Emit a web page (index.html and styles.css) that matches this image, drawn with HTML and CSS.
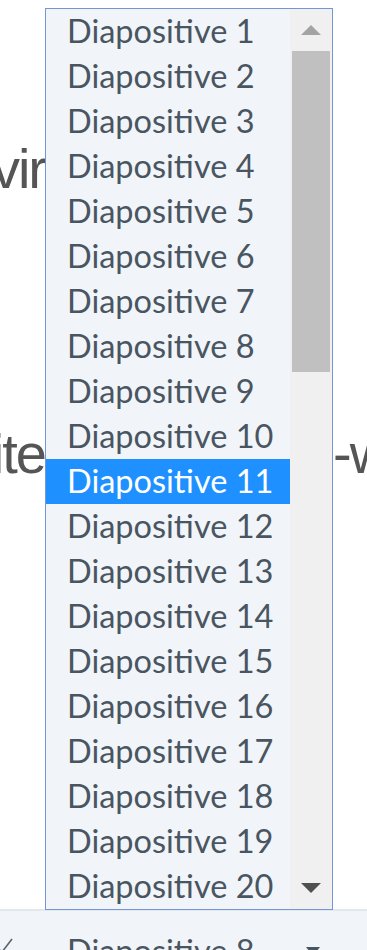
FILE: index.html
```html
<!DOCTYPE html>
<html lang="fr">
<head>
  <meta charset="UTF-8">
  <meta name="viewport" content="width=device-width, initial-scale=1.0">
  <title>Diapositives</title>
  <link rel="stylesheet" href="styles.css">
</head>
<body>
  <!-- Page content behind the open list -->
  <main class="page">
    <p class="page-line">
      <span class="page-line-start"><span>Envir</span></span>
      <span>onnement</span>
    </p>
    <p class="page-line page-line-low">
      <span class="page-line-start"><span>Suite</span></span>
      <span class="page-line-end">-web</span>
    </p>
  </main>

  <!-- Slide picker bar -->
  <div class="slide-bar">
    <svg class="check" width="14" height="16" viewBox="0 0 14 16">
      <polyline points="-4,10 2,15 12,2" fill="none" stroke="#5a6470" stroke-width="1.6"/>
    </svg>
    <span class="slide-bar-label">Diapositive 8</span>
    <span class="slide-bar-caret"></span>
  </div>

  <!-- Open list of slides -->
  <div class="slide-list">
    <ul class="slide-options">
      <li>Diapositive 1</li>
      <li>Diapositive 2</li>
      <li>Diapositive 3</li>
      <li>Diapositive 4</li>
      <li>Diapositive 5</li>
      <li>Diapositive 6</li>
      <li>Diapositive 7</li>
      <li>Diapositive 8</li>
      <li>Diapositive 9</li>
      <li>Diapositive 10</li>
      <li class="selected">Diapositive 11</li>
      <li>Diapositive 12</li>
      <li>Diapositive 13</li>
      <li>Diapositive 14</li>
      <li>Diapositive 15</li>
      <li>Diapositive 16</li>
      <li>Diapositive 17</li>
      <li>Diapositive 18</li>
      <li>Diapositive 19</li>
      <li>Diapositive 20</li>
    </ul>
    <div class="scrollbar">
      <div class="scroll-btn"><span class="arrow-up"></span></div>
      <div class="scroll-track"><div class="scroll-thumb"></div></div>
      <div class="scroll-btn"><span class="arrow-down"></span></div>
    </div>
  </div>
</body>
</html>
```

FILE: styles.css
```css
body {
  margin: 0;
  height: 950px;
  overflow: hidden;
  background: #ffffff;
  font-family: 'Lato', sans-serif;
}

.page {
  height: 909px;
  padding-top: 137px;
  box-sizing: border-box;
  overflow: hidden;
  font-family: 'Liberation Sans', Arial, sans-serif;
  color: #555555;
  letter-spacing: -2px;
}

.page-line {
  margin: 0;
  display: flex;
  font-size: 56px;
  line-height: 64px;
  white-space: nowrap;
}

.page-line-low {
  margin-top: 221px;
}

.page-line-start {
  width: 45px;
  flex: none;
  display: flex;
  justify-content: flex-end;
  overflow: hidden;
}

.page-line-end {
  margin-left: 288px;
}

/* Bottom bar */
.slide-bar {
  display: flex;
  align-items: flex-start;
  height: 80px;
  padding-top: 18px;
  box-sizing: border-box;
  background: #f1f4f8;
  border-top: 2px solid #e3e8ee;
  color: #4a5562;
}

.check {
  margin-top: 8px;
  flex: none;
}

.slide-bar-label {
  margin-left: 53px;
  font-size: 32.5px;
  line-height: 43px;
}

.slide-bar-caret {
  margin: 18px 0 0 auto;
  margin-right: 47px;
  border-left: 7px solid transparent;
  border-right: 7px solid transparent;
  border-top: 9px solid #4a5562;
}

/* Open list */
.slide-list {
  position: absolute;
  left: 45px;
  top: 8px;
  width: 288px;
  height: 902px;
  box-sizing: border-box;
  display: flex;
  border: 1px solid #7296d6;
  background: #f1f5f9;
}

.slide-options {
  flex: 1;
  margin: 0;
  padding: 0;
  list-style: none;
}

.slide-options li {
  height: 45px;
  padding-left: 21px;
  font-size: 32.5px;
  line-height: 43px;
  color: #4a5562;
  white-space: nowrap;
}

.slide-options li.selected {
  background: #1e90ff;
  color: #ffffff;
}

.scrollbar {
  width: 42px;
  display: flex;
  flex-direction: column;
  background: #f0f0f0;
}

.scroll-btn {
  height: 42px;
  display: flex;
  align-items: center;
  justify-content: center;
}

.scroll-track {
  flex: 1;
  padding: 0 2px;
}

.scroll-thumb {
  height: 321px;
  background: #c0c0c0;
}

.arrow-up {
  border-left: 10px solid transparent;
  border-right: 10px solid transparent;
  border-bottom: 10px solid #a3a3a3;
}

.arrow-down {
  border-left: 10px solid transparent;
  border-right: 10px solid transparent;
  border-top: 10px solid #505050;
}
```
